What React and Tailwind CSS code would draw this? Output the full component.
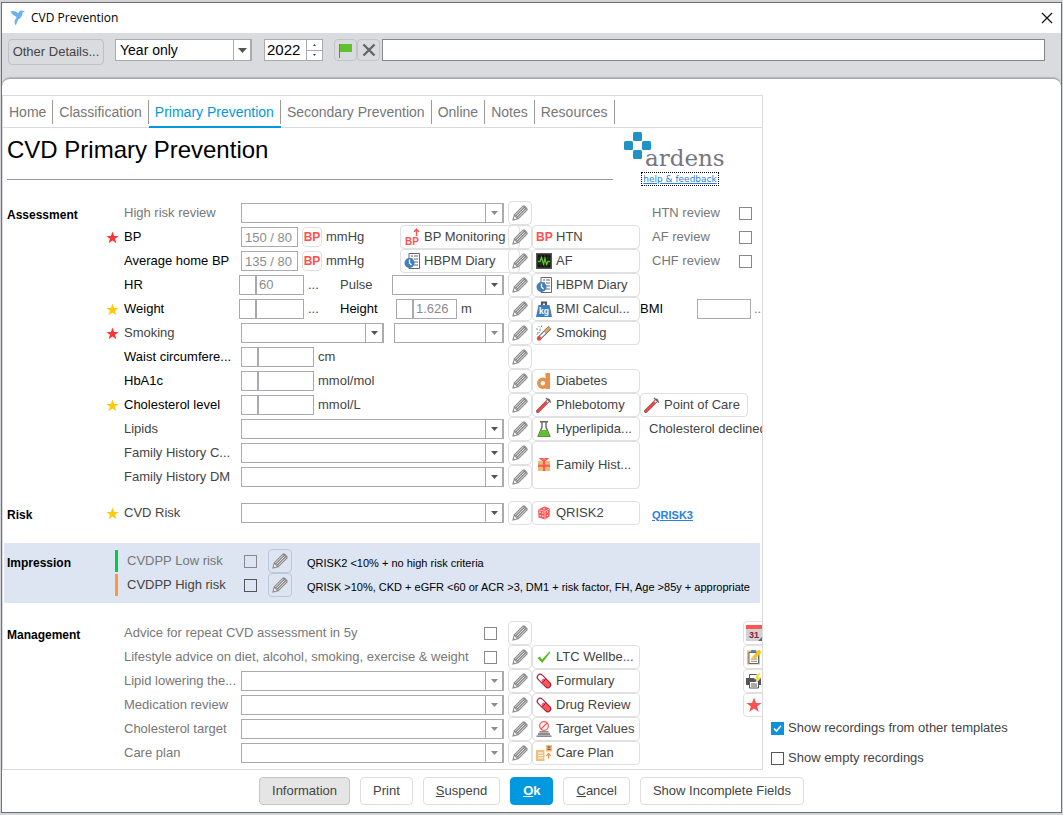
import React from 'react';
import clsx from 'clsx';

/* ---------- icons ---------- */

const PencilIcon = () => (
  <svg width="18" height="18" viewBox="0 0 18 18" fill="none" className="shrink-0">
    <path d="M1.200 16.800 2.800 10.500 11.600 1.700Q12.800 .8 14 1.800L16.200 4Q17.200 5.200 16.300 6.400L7.500 15.200Z" fill="#8e8e8e" />
    <path d="M4.300 11 12.300 3M5.700 12.300 13.700 4.300M7.100 13.600 15.100 5.600" stroke="#fff" strokeWidth=".7" />
    <path d="M3.500 12.300 5.800 14.600 3.700 15.100 2.900 14.300Z" fill="#fff" />
  </svg>
);

const Star = ({ color, size = 13 }) => (
  <svg width={size} height={size} viewBox="0 0 16 16" className="shrink-0">
    <path d="M8 .6 10 6h5.6L11.1 9.4 12.8 15 8 11.6 3.2 15 4.9 9.4.4 6H6Z" fill={color} />
  </svg>
);

const BpIcon = () => <span className="w-4 text-xs leading-4 font-bold text-[#ff4f4f]">BP</span>;

const BpUpIcon = () => (
  <svg width="16" height="16" viewBox="0 0 16 16" className="shrink-0 overflow-visible">
    <text x="1" y="16" fill="#ff4f4f" fontSize="10" fontWeight="bold">BP</text>
    <path d="M12.5 7V0M10 2.8 12.5.2 15 2.8" stroke="#ff4f4f" strokeWidth="1.4" fill="none" />
  </svg>
);

const DiaryIcon = () => (
  <svg width="16" height="16" viewBox="0 0 16 16" className="shrink-0">
    <path d="M5 .5h10.5v15H5z" fill="#fff" stroke="#666" />
    <path d="M7 3h2M7 6h2M10 3h4M10 6h4M10 9h4M10 12h4" stroke="#666" strokeWidth="1.2" />
    <circle cx="5.5" cy="10" r="5" fill="#3f7fbf" />
    <path d="M5.5 6.5V10l2 2" stroke="#fff" strokeWidth="1.3" fill="none" />
  </svg>
);

const EcgIcon = () => (
  <svg width="16" height="16" viewBox="0 0 16 16" className="shrink-0">
    <path d="M0 0h16v16H0z" fill="#555" />
    <path d="M1.5 1.5h13v13h-13z" fill="#111" />
    <path d="M5 2v12M8.500 2v12M12 2v12M2 5h12M2 11h12" stroke="#2c4a20" strokeWidth=".7" />
    <path d="M2 8.500h2L5.500 4.500 7.500 11 9 5.500l1.500 6 1.500-3h2" stroke="#62c22c" strokeWidth="1.3" fill="none" />
  </svg>
);

const WeightIcon = () => (
  <svg width="16" height="16" viewBox="0 0 16 16" className="shrink-0">
    <path d="M6 4V1.500h4V4" stroke="#555" strokeWidth="2" fill="none" />
    <path d="M2.500 4h11L16 16H0z" fill="#3f7fbf" />
    <text x="3" y="12.500" fill="#fff" fontSize="8.500" fontWeight="bold">kg</text>
  </svg>
);

const SmokingIcon = () => (
  <svg width="16" height="16" viewBox="0 0 16 16" className="shrink-0">
    <path d="M3 13.500 14 2.500" stroke="#666" strokeWidth="4" />
    <path d="M4.500 12 9 7.500" stroke="#fff" strokeWidth="2.200" />
    <path d="M9 7.500 13.800 2.700" stroke="#e8a860" strokeWidth="2.600" />
    <circle cx="3" cy="13.500" r="2.200" fill="#f04848" />
    <path d="M2 9V7M1 5V3M4 6V4M3 2V1M5.500 2V.5" stroke="#5c9ad0" />
    <path d="M1 10V9M3.500 8V7M4.500 3.500V2.500" stroke="#dba43b" />
  </svg>
);

const DiabetesIcon = () => (
  <svg width="16" height="16" viewBox="0 0 16 16" className="shrink-0">
    <circle cx="6.800" cy="10.200" r="4" stroke="#e8904a" strokeWidth="3.400" fill="none" />
    <path d="M9.500 0H14v16H9.500z" fill="#e8904a" />
  </svg>
);

const TubeIcon = () => (
  <svg width="16" height="16" viewBox="0 0 16 16" className="shrink-0">
    <path d="M1.800 14.200 12.500 3.500" stroke="#6b6b6b" strokeWidth="3.600" strokeLinecap="round" />
    <path d="M2 14 10.500 5.500" stroke="#f04848" strokeWidth="2.600" strokeLinecap="round" />
    <path d="M11 5 12.300 3.700" stroke="#fff" strokeWidth="2" />
    <path d="M10 1 15 5.500" stroke="#6b6b6b" strokeWidth="1.400" />
  </svg>
);

const FlaskIcon = () => (
  <svg width="16" height="16" viewBox="0 0 16 16" className="shrink-0">
    <path d="M4 .7h8M6 1v5L2.200 15.300h11.600L10 6V1" stroke="#666" strokeWidth="1.400" fill="#fff" />
    <path d="M4.800 9 11.200 9 13.800 15.500H2.200z" fill="#5fc22c" />
  </svg>
);

const GiftIcon = () => (
  <svg width="16" height="16" viewBox="0 0 16 16" className="shrink-0">
    <path d="M2 4h12v10H2z" fill="#e9bb76" />
    <path d="M2 7.800h12v2H2zM7 3.500h2V14H7z" fill="#f55" />
    <path d="M7.500 4 3.500 1.200M8.500 4l4-2.800M4 1.500h3L8 4l1-2.500h3" stroke="#f55" strokeWidth="1.200" fill="none" />
  </svg>
);

const DiceIcon = () => (
  <svg width="16" height="16" viewBox="0 0 16 16" className="shrink-0">
    <path d="M2 4.500 8.500 1.500 14 3.500 13.500 11.500 9 14.500 2.500 12.500Z" fill="#ff5555" />
    <path d="M2 4.700 9 6.300 14 3.700M9 6.300V14.300" stroke="#fff" strokeWidth=".6" fill="none" />
    <g fill="#fff">
      <circle cx="4" cy="7.200" r=".8" />
      <circle cx="6.800" cy="11.300" r=".8" />
      <circle cx="4.200" cy="10.700" r=".7" />
      <circle cx="6.800" cy="8" r=".7" />
      <circle cx="11.500" cy="7" r=".7" />
      <circle cx="11.500" cy="10.500" r=".7" />
      <circle cx="8" cy="3.700" r=".8" />
    </g>
  </svg>
);

const TickIcon = () => (
  <svg width="16" height="16" viewBox="0 0 16 16" className="shrink-0">
    <path d="M1.500 9 4 7.500 6 10.500 13.500 2.500 14.500 3.300 6.200 14Z" fill="#55bb2a" />
  </svg>
);

const PillIcon = () => (
  <svg width="16" height="16" viewBox="0 0 16 16" className="shrink-0">
    <path d="M4.200 4.200 11.800 11.800" stroke="#a01f45" strokeWidth="7" strokeLinecap="round" />
    <path d="M4.200 4.200 8 8" stroke="#fff" strokeWidth="4.800" strokeLinecap="round" />
    <path d="M8 8 11.800 11.800" stroke="#f55" strokeWidth="4.800" strokeLinecap="round" />
    <path d="M6.200 9.800 9.800 6.200" stroke="#a01f45" />
  </svg>
);

const TargetIcon = () => (
  <svg width="16" height="16" viewBox="0 0 16 16" className="shrink-0">
    <circle cx="8" cy="5" r="4.300" stroke="#f55" strokeWidth="1.300" fill="#fff" />
    <path d="M5 8 11 2" stroke="#f55" strokeWidth="1.300" />
    <path d="M3.500 10.800h9M2 13h12M.5 15.200h15" stroke="#666" strokeWidth="1.300" />
  </svg>
);

const CarePlanIcon = () => (
  <svg width="16" height="16" viewBox="0 0 16 16" className="shrink-0">
    <path d="M0 5h8.500v11H0zM10 0h6v6.500h-6z" fill="#ecc07c" />
    <path d="M2 8h5M2 10.500h5M2 13h5" stroke="#fff" />
    <path d="M11.500 2h3M11.500 4.300h3" stroke="#8a2030" />
    <path d="M12.500 13.500V8.500M10.200 10.800 12.500 8.500 14.800 10.800" stroke="#f09030" strokeWidth="1.200" fill="none" />
  </svg>
);

const CalendarIcon = () => (
  <svg width="16" height="16" viewBox="0 0 16 16" className="shrink-0">
    <path d="M0 0h16v16H0z" fill="#d2d2d2" />
    <path d="M0 0h16v4H0z" fill="#f55" />
    <path d="M12 16h4v-4z" fill="#666" />
    <text x="3" y="13" fill="#8a2040" fontSize="9" fontWeight="bold">31</text>
  </svg>
);

const ClipboardIcon = () => (
  <svg width="16" height="16" viewBox="0 0 16 16" className="shrink-0">
    <path d="M1 1.500h13v14H1z" fill="#e9bb76" />
    <path d="M3 3.500h9.500v11H3z" fill="#fff" stroke="#666" />
    <path d="M5 1h5v2H5z" fill="#4c8ccc" />
    <path d="M5 10h6M5 12.300h6" stroke="#888" />
    <path d="M7.500 9 14.500 2" stroke="#f2c918" strokeWidth="3.600" />
    <path d="M6 10.500 6.800 7.700 8.800 9.700Z" fill="#e9bb76" />
  </svg>
);

const PrinterIcon = () => (
  <svg width="16" height="16" viewBox="0 0 16 16" className="shrink-0">
    <path d="M3.500 1.500h7v4h-7z" fill="#fff" stroke="#555" />
    <path d="M0 5h15v7H0z" fill="#555" />
    <path d="M3.500 8.500h9v6.500h-9z" fill="#fff" stroke="#555" />
    <path d="M5 11h6M5 13h6" stroke="#555" />
    <path d="M12 0 8.500 6H11L9.500 10.500 15.500 4H12.500L15 0Z" fill="#f5e02a" stroke="#fff" strokeWidth=".6" />
  </svg>
);

const BirdIcon = () => (
  <svg width="16" height="16" viewBox="0 0 16 16" className="shrink-0">
    <path d="M.5 1.200Q6 .4 8 3.200L9.500 1.200Q11.500 -.2 15 1.600L12.600 2.400Q12.200 7.500 8.200 9.600L5.800 15.600Q3.800 12.500 5 9.800 7 8 6 6.500 2.500 5.500 .5 1.200Z" fill="#6cb2ec" />
  </svg>
);

const ArdensLogo = () => (
  <svg width="104" height="40" viewBox="0 0 104 40" className="overflow-visible font-['DejaVu_Serif',serif]">
    <g fill="#2192c7">
      <rect x="10" y="0" width="9" height="9" rx="1.500" />
      <rect x="1" y="9" width="9" height="9" rx="1.500" />
      <rect x="19" y="9" width="9" height="9" rx="1.500" />
      <rect x="10" y="18" width="9" height="9" rx="1.500" />
    </g>
    <text x="22" y="34" fill="#77757f" fontSize="23">ardens</text>
  </svg>
);

/* ---------- controls ---------- */

const Drop = ({ label, id, className, muted, children }) => (
  <div className={clsx('relative shrink-0', className)}>
    <select
      id={id}
      aria-label={label}
      className="block h-full w-full appearance-none rounded-none border border-[#a9a9ae] bg-white px-1 text-black outline-none"
    >
      {children || <option value=""></option>}
    </select>
    <span className="pointer-events-none absolute inset-y-0 right-0 flex w-[19px] items-center justify-center border border-r-2 border-[#a9a9ae]">
      <svg width={children ? 9 : 7} height={children ? 5 : 4} viewBox="0 0 9 5">
        <path d="M0 0h9L4.500 5z" fill={muted ? '#8c8c8c' : '#555'} />
      </svg>
    </span>
  </div>
);

const Box = ({ label, id, value = '', className }) => (
  <input
    id={id}
    aria-label={label}
    defaultValue={value}
    className={clsx('h-5 shrink-0 border border-[#a9a9ae] bg-white px-[3px] text-[13px] text-[#8c8c8c] outline-none', className)}
  />
);

// Comparator cell followed by the numeric value
const SplitBox = ({ label, id, value = '', className }) => (
  <div className={clsx('flex h-5 shrink-0 border border-[#a9a9ae]', className)}>
    <input aria-label={`${label} comparator`} className="w-4 border-r border-[#a9a9ae] outline-none" />
    <input
      id={id}
      aria-label={label}
      defaultValue={value}
      className="min-w-0 flex-1 border-l border-[#a9a9ae] px-0.5 text-[13px] text-[#8c8c8c] outline-none"
    />
  </div>
);

const Check = ({ label, id, dark, checked }) => (
  <span className="relative flex size-[13px] shrink-0">
    <input
      type="checkbox"
      id={id}
      aria-label={label}
      defaultChecked={checked}
      className={clsx(
        'peer size-[13px] appearance-none border checked:border-[#0a93dc] checked:bg-[#0a93dc]',
        dark ? 'border-[#555]' : 'border-[#888]'
      )}
    />
    <svg viewBox="0 0 13 13" className="pointer-events-none absolute inset-0 hidden peer-checked:block">
      <path d="M3 6.500 5.500 9 10 3.800" stroke="#fff" strokeWidth="1.600" fill="none" />
    </svg>
  </span>
);

const Pencil = ({ className }) => (
  <button aria-label="Edit" className={clsx('flex size-6 shrink-0 items-center justify-center rounded border', className || 'border-[#e0e0e0]')}>
    <PencilIcon />
  </button>
);

const Btn = ({ icon: Icon, className, children }) => (
  <button
    className={clsx(
      'flex shrink-0 items-center gap-1 overflow-hidden rounded border border-[#e0e0e0] px-[3px] whitespace-nowrap text-[#444]',
      className || 'h-6 w-[108px]'
    )}
  >
    <Icon />
    {children}
  </button>
);

const BpBtn = () => (
  <button className="flex size-5 shrink-0 items-center justify-center rounded border border-[#e0e0e0] text-xs font-bold text-[#ff4f4f]">
    BP
  </button>
);

const tones = {
  black: 'text-black',
  dark: 'text-[#444]',
  muted: 'text-[#777]',
};

const starColors = { red: '#ff3333', gold: '#ffc90e' };

// One line of the form; `action` may span two lines
const Row = ({ id, star, label, tone = 'muted', wide, field, action, extra, flush }) => (
  <>
    <span className="col-start-2 self-center">{star && <Star color={starColors[star]} />}</span>
    {wide ? (
      <div className="col-span-2 col-start-3 flex items-center justify-between pr-[11px]">
        <label htmlFor={id} className={tones[tone]}>{label}</label>
        {field}
      </div>
    ) : (
      <>
        <label htmlFor={id} className={clsx('col-start-3 self-center whitespace-nowrap', tones[tone])}>{label}</label>
        <div className={clsx('col-start-4 flex items-center text-[#444]', !flush && 'pl-0.5')}>{field}</div>
      </>
    )}
    <div className="col-start-5"><Pencil /></div>
    {action && <div className={clsx('col-start-6', action.double && 'row-span-2')}>{action.node}</div>}
    <div className="col-start-7 flex items-center overflow-hidden whitespace-nowrap">{extra}</div>
  </>
);

const Section = ({ title, className, children }) => (
  <section className={clsx('grid auto-rows-[24px] grid-cols-[103px_18px_115px_269px_24px_108px_minmax(0,1fr)]', className)}>
    <h2 className="col-start-1 pl-1 text-xs leading-7 font-bold text-black">{title}</h2>
    {children}
  </section>
);

const act = (icon, text) => ({ node: <Btn icon={icon}>{text}</Btn> });

const FullDrop = ({ id, muted }) => <Drop id={id} muted={muted} className="h-5 w-[263px]" />;

const ReviewCheck = ({ id, children }) => (
  <>
    <label htmlFor={id} className="w-[99px] shrink-0 pl-3 text-[#777]">{children}</label>
    <Check id={id} />
  </>
);

const SideBtn = ({ label, children }) => (
  <button aria-label={label} className="ml-[103px] flex h-6 w-7 shrink-0 items-center rounded border border-[#e0e0e0] pl-0.5">{children}</button>
);

/* ---------- page parts ---------- */

const tabs = ['Home', 'Classification', 'Primary Prevention', 'Secondary Prevention', 'Online', 'Notes', 'Resources'];

function Tabs() {
  return (
    <nav className="flex h-8 border-b border-[#d9d9de] text-sm">
      {tabs.map((t) => {
        const active = t === 'Primary Prevention';
        return (
          <button
            key={t}
            className={clsx('-mb-px flex items-start border-b-2 pt-1', active ? 'border-[#0099e0] text-[#0099e0]' : 'border-transparent text-[#777]')}
          >
            <span className="flex h-6 items-center border-r border-[#999] px-1.5">{t}</span>
          </button>
        );
      })}
    </nav>
  );
}

function Toolbar() {
  return (
    <div className="flex h-[45px] items-start bg-[#dadbdf] pt-1.5 pr-4 pl-[6px]">
      <button className="h-[26px] w-24 shrink-0 rounded border border-[#bfc0c4] text-[#444]">Other Details...</button>
      <Drop label="Date precision" className="ml-[11px] h-[22px] w-[137px] text-sm">
        <option>Year only</option>
      </Drop>
      <div className="ml-3 flex h-[22px] w-[59px] shrink-0 border border-[#a9a9ae] bg-white">
        <input aria-label="Year" defaultValue="2022" className="w-[41px] px-0.5 text-[15px] text-black outline-none" />
        <div className="flex flex-1 flex-col border-l border-[#a9a9ae]">
          <button aria-label="Next year" className="flex flex-1 items-center justify-center border-b border-[#a9a9ae]">
            <svg width="3" height="2" viewBox="0 0 3 2"><path d="M0 2h3L1.500 0z" fill="#444" /></svg>
          </button>
          <button aria-label="Previous year" className="flex flex-1 items-center justify-center">
            <svg width="3" height="2" viewBox="0 0 3 2"><path d="M0 0h3L1.500 2z" fill="#444" /></svg>
          </button>
        </div>
      </div>
      <button aria-label="Flag" className="ml-[11px] flex h-[22px] w-[23px] shrink-0 items-center justify-center rounded border border-[#c3c4c8]">
        <svg width="13" height="15" viewBox="0 0 13 15">
          <path d="M.5 1v14" stroke="#777" />
          <path d="M1 1h12v8H1z" fill="#5fc22c" />
        </svg>
      </button>
      <button aria-label="Clear" className="flex h-[22px] w-[23px] shrink-0 items-center justify-center rounded border border-[#c3c4c8]">
        <svg width="14" height="14" viewBox="0 0 14 14">
          <path d="M1.500 1.500 12.500 12.500M12.500 1.500 1.500 12.500" stroke="#666" strokeWidth="2.400" />
        </svg>
      </button>
      <input aria-label="Notes" className="ml-0.5 h-[22px] min-w-0 flex-1 border border-[#85868c] bg-white px-1 outline-none" />
    </div>
  );
}

function Assessment() {
  return (
    <Section title="Assessment">
      <Row id="hrr" label="High risk review" field={<FullDrop id="hrr" muted />} extra={<ReviewCheck id="htn">HTN review</ReviewCheck>} />
      <Row
        id="bp"
        star="red"
        label="BP"
        tone="black"
        field={
          <>
            <Box id="bp" value="150 / 80" className="mr-1 w-[57px]" />
            <BpBtn />
            <span className="w-[78px] shrink-0 pl-1">mmHg</span>
            <Btn icon={BpUpIcon} className="h-6 w-[120px]">BP Monitoring</Btn>
          </>
        }
        action={act(BpIcon, 'HTN')}
        extra={<ReviewCheck id="afr">AF review</ReviewCheck>}
      />
      <Row
        id="hbp"
        label="Average home BP"
        tone="black"
        field={
          <>
            <Box id="hbp" value="135 / 80" className="mr-1 w-[57px]" />
            <BpBtn />
            <span className="w-[78px] shrink-0 pl-1">mmHg</span>
            <Btn icon={DiaryIcon} className="h-6 w-[120px]">HBPM Diary</Btn>
          </>
        }
        action={act(EcgIcon, 'AF')}
        extra={<ReviewCheck id="chf">CHF review</ReviewCheck>}
      />
      <Row
        id="hr"
        label="HR"
        tone="black"
        flush
        field={
          <>
            <SplitBox id="hr" label="HR" value="60" className="w-[65px]" />
            <span className="w-9 pl-1">...</span>
            <label htmlFor="pulse" className="w-[52px]">Pulse</label>
            <Drop id="pulse" className="h-5 w-28" />
          </>
        }
        action={act(DiaryIcon, 'HBPM Diary')}
      />
      <Row
        id="weight"
        star="gold"
        label="Weight"
        tone="black"
        flush
        field={
          <>
            <SplitBox id="weight" label="Weight" className="w-[65px]" />
            <span className="w-9 pl-1">...</span>
            <label htmlFor="height" className="w-14 text-black">Height</label>
            <SplitBox id="height" label="Height" value="1.626" className="w-[61px]" />
            <span className="pl-1">m</span>
          </>
        }
        action={act(WeightIcon, 'BMI Calcul...')}
        extra={
          <>
            <label htmlFor="bmi" className="w-[57px] shrink-0 text-black">BMI</label>
            <Box id="bmi" className="w-[54px]" />
            <span className="pl-[3px] text-[#777]">..</span>
          </>
        }
      />
      <Row
        id="smoking"
        star="red"
        label="Smoking"
        tone="dark"
        field={
          <>
            <Drop id="smoking" className="mr-2.5 h-5 w-[143px]" />
            <Drop label="Smoking detail" muted className="h-5 w-[110px]" />
          </>
        }
        action={act(SmokingIcon, 'Smoking')}
      />
      <Row id="waist" label="Waist circumfere..." tone="black" field={<><SplitBox id="waist" label="Waist circumference" className="w-[73px]" /><span className="pl-1">cm</span></>} />
      <Row id="hba1c" label="HbA1c" tone="black" field={<><SplitBox id="hba1c" label="HbA1c" className="w-[73px]" /><span className="pl-1">mmol/mol</span></>} action={act(DiabetesIcon, 'Diabetes')} />
      <Row
        id="chol"
        star="gold"
        label="Cholesterol level"
        tone="black"
        field={<><SplitBox id="chol" label="Cholesterol level" className="w-[73px]" /><span className="pl-1">mmol/L</span></>}
        action={act(TubeIcon, 'Phlebotomy')}
        extra={<Btn icon={TubeIcon}>Point of Care</Btn>}
      />
      <Row id="lipids" label="Lipids" tone="dark" field={<FullDrop id="lipids" />} action={act(FlaskIcon, 'Hyperlipida...')} extra={<span className="pl-[9px] text-[#444]">Cholesterol declined</span>} />
      <Row
        id="fhc"
        label="Family History C..."
        tone="dark"
        field={<FullDrop id="fhc" />}
        action={{ double: true, node: <Btn icon={GiftIcon} className="h-12 w-[108px]">Family Hist...</Btn> }}
      />
      <Row id="fhd" label="Family History DM" tone="dark" field={<FullDrop id="fhd" />} />
    </Section>
  );
}

function Impression() {
  const rows = [
    { id: 'low', label: 'CVDPP Low risk', bar: 'border-[#00cc44]', text: 'text-[#777]', note: 'QRISK2 <10% + no high risk criteria' },
    { id: 'high', label: 'CVDPP High risk', bar: 'border-[#ff9933]', text: 'text-[#444]', note: 'QRISK >10%, CKD + eGFR <60 or ACR >3, DM1 + risk factor, FH, Age >85y + appropriate' },
  ];
  return (
    <section className="mr-0.5 ml-px mt-[18px] flex bg-[#dce5f1] py-1.5">
      <h2 className="w-[111px] shrink-0 pl-[3px] text-xs leading-7 font-bold text-black">Impression</h2>
      <div className="min-w-0 flex-1">
        {rows.map((r) => (
          <div key={r.id} className="flex h-6 items-center">
            <label htmlFor={r.id} className={clsx('w-[129px] shrink-0 border-l-3 pl-[9px] leading-[22px]', r.bar, r.text)}>{r.label}</label>
            <Check id={r.id} dark={r.id === 'high'} />
            <span className="px-[11px]"><Pencil className="border-[#bcc8d8]" /></span>
            <span className="truncate pt-1 pl-1 text-[11px] text-black">{r.note}</span>
          </div>
        ))}
      </div>
    </section>
  );
}

function Management() {
  return (
    <Section title="Management" className="mt-[18px]">
      <Row id="repeat" wide label="Advice for repeat CVD assessment in 5y" field={<Check id="repeat" />} extra={<SideBtn label="Calendar"><CalendarIcon /></SideBtn>} />
      <Row
        id="life"
        wide
        label="Lifestyle advice on diet, alcohol, smoking, exercise & weight"
        field={<Check id="life" />}
        action={act(TickIcon, 'LTC Wellbe...')}
        extra={<SideBtn label="Clipboard"><ClipboardIcon /></SideBtn>}
      />
      <Row id="llt" label="Lipid lowering the..." field={<FullDrop id="llt" muted />} action={act(PillIcon, 'Formulary')} extra={<SideBtn label="Quick print"><PrinterIcon /></SideBtn>} />
      <Row id="med" label="Medication review" field={<FullDrop id="med" muted />} action={act(PillIcon, 'Drug Review')} extra={<SideBtn label="Favourite"><Star color="#ff4f4f" size={16} /></SideBtn>} />
      <Row id="target" label="Cholesterol target" field={<FullDrop id="target" muted />} action={act(TargetIcon, 'Target Values')} />
      <Row id="care" label="Care plan" field={<FullDrop id="care" muted />} action={act(CarePlanIcon, 'Care Plan')} />
    </Section>
  );
}

const footBtn = 'h-7 rounded border px-3';

export default function App() {
  return (
    <div className="min-h-screen bg-[#d3d4d8] px-px pt-[2px] pb-[2px] font-['Liberation_Sans',Arial,sans-serif] text-[13px] leading-4">
      <div className="border border-[#6d6d72] bg-white">
        <header className="flex h-[30px] items-center gap-[5px] bg-white pr-2 pl-2">
          <BirdIcon />
          <span className="font-['Open_Sans',sans-serif] text-xs text-black">CVD Prevention</span>
          <button aria-label="Close" className="ml-auto">
            <svg width="12" height="12" viewBox="0 0 12 12"><path d="M1 1 11 11M11 1 1 11" stroke="#111" strokeWidth="1.200" /></svg>
          </button>
        </header>
        <Toolbar />

        <div className="bg-[#dadbdf]">
          <div className="rounded-t-lg border-t border-[#a4a5aa] bg-white pt-4 shadow-[0_-1px_1px_#b9babf]">
            <div className="flex">
              <main className="min-w-0 flex-1 overflow-hidden border border-[#d9d9de] pb-1">
                <Tabs />
                <div className="flex h-[73px]">
                  <div className="min-w-0 flex-1 pl-1">
                    <h1 className="h-[52px] border-b border-[#999] pt-1.5 text-2xl leading-8 text-black">CVD Primary Prevention</h1>
                  </div>
                  <div className="w-[149px] shrink-0 pt-1 pl-2.5">
                    <ArdensLogo />
                    <a
                      href="#help"
                      className="ml-[18px] block w-[78px] border border-dotted border-black text-center font-['DejaVu_Sans',sans-serif] text-[9px] leading-3 whitespace-nowrap text-[#2a7fe0] underline"
                    >
                      help & feedback
                    </a>
                  </div>
                </div>
                <Assessment />
                <Section title="Risk" className="mt-3">
                  <Row
                    id="risk"
                    star="gold"
                    label="CVD Risk"
                    tone="dark"
                    field={<FullDrop id="risk" />}
                    action={act(DiceIcon, 'QRISK2')}
                    extra={<a href="#qrisk3" className="pt-1 pl-3 text-[11px] font-bold text-[#2a7fe0] underline">QRISK3</a>}
                  />
                </Section>
                <Impression />
                <Management />
              </main>

              <aside className="flex w-[298px] shrink-0 flex-col justify-end gap-3.5 pb-1 pl-2 text-[#444]">
                <label className="flex items-center gap-1"><Check dark checked />Show recordings from other templates</label>
                <label className="flex items-center gap-1"><Check dark />Show empty recordings</label>
              </aside>
            </div>

            <footer className="flex flex-wrap justify-center gap-2.5 py-[7px] text-[#444]">
              <button className={clsx(footBtn, 'border-[#c4c4c4] bg-[#e5e5e5]')}>Information</button>
              <button className={clsx(footBtn, 'border-[#dedede]')}>Print</button>
              <button className={clsx(footBtn, 'border-[#dedede]')}><u>S</u>uspend</button>
              <button className={clsx(footBtn, 'border-[#0099e0] bg-[#0099e0] font-bold text-white')}><u>O</u>k</button>
              <button className={clsx(footBtn, 'border-[#dedede]')}><u>C</u>ancel</button>
              <button className={clsx(footBtn, 'border-[#dedede]')}>Show Incomplete Fields</button>
            </footer>
          </div>
        </div>
      </div>
    </div>
  );
}
